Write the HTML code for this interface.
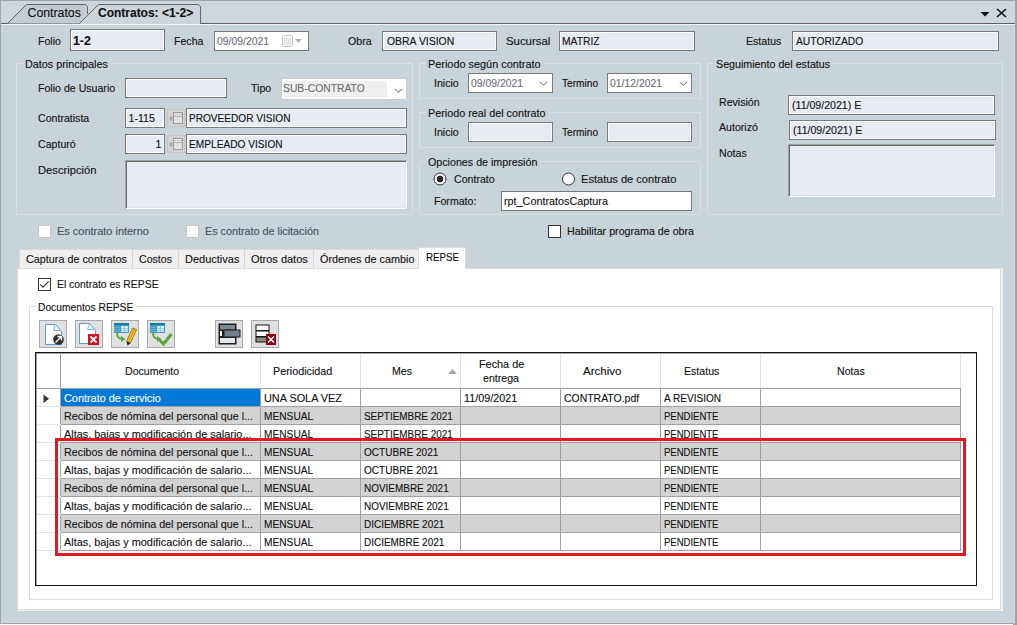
<!DOCTYPE html>
<html><head><meta charset="utf-8">
<style>
*{box-sizing:border-box;margin:0;padding:0}
html,body{width:1017px;height:625px;overflow:hidden;background:#fff}
body{position:relative;font-family:"Liberation Sans",sans-serif;font-size:10.6px;color:#111}
.a{position:absolute}
.t{position:absolute;white-space:nowrap;-webkit-text-stroke:0.12px currentColor}
</style></head><body>
<div class="a" style="left:0px;top:0px;width:1017px;height:624px;background:#a3a3a3"></div>
<div class="a" style="left:1013px;top:624px;width:4px;height:1px;background:#a3a3a3"></div>
<div class="a" style="left:1px;top:1px;width:1014px;height:622px;background:#ced7dd"></div>
<div class="a" style="left:1px;top:1px;width:1013px;height:621px;background:#c9d3da"></div>
<div class="a" style="left:1px;top:1px;width:1014px;height:22px;background:#cdd6dc"></div>
<div class="a" style="left:1px;top:23px;width:1014px;height:1px;background:#5f5f5f"></div>
<div class="a" style="left:1px;top:24px;width:1014px;height:1px;background:#f1f4f6"></div>
<svg class="a" style="left:0;top:0" width="1017" height="26">
<path d="M7.5,23.5 L26.5,4.5 L85.5,4.5 L87.5,6.5 L87.5,14 L79.5,23.5 Z" fill="#c3ccd3" stroke="none"/>
<path d="M7.5,23.5 L26.5,4.5 L85.5,4.5 L87.5,6.5 L87.5,14" fill="none" stroke="#666" stroke-width="1"/>
<path d="M79.5,23.5 L98.5,4.5 L198.5,4.5 L200.5,6.5 L200.5,23.5" fill="#ccd5db" stroke="#666" stroke-width="1"/>
<rect x="80" y="23" width="120" height="1" fill="#ccd5db"/>
<path d="M980.5,12 L989.5,12 L985,16.5 Z" fill="#111"/>
<path d="M997,9 L1006,17 M1006,9 L997,17" stroke="#111" stroke-width="1.6"/>
</svg>
<div class="t" style="left:27.5px;top:5.84px;font-size:12.3px;line-height:14px;">Contratos</div>
<div class="t" style="left:97.5px;top:5.84px;font-size:12.3px;line-height:14px;font-weight:bold;transform:scaleX(0.975);transform-origin:0 0;">Contratos: &lt;1-2&gt;</div>
<div class="t" style="left:38px;top:34.43px;font-size:10.6px;line-height:14px;">Folio</div>
<div class="a" style="left:70px;top:29px;width:95px;height:22px;background:#7a7a7a"></div>
<div class="a" style="left:71px;top:30px;width:93px;height:20px;background:#ffffff"></div>
<div class="a" style="left:72px;top:31px;width:91px;height:18px;background:#e7ecf3"></div>
<div class="t" style="left:72.5px;top:33.60px;font-size:13px;line-height:14px;font-weight:bold;transform:scaleX(0.95);transform-origin:0 0;">1-2</div>
<div class="t" style="left:174px;top:34.43px;font-size:10.6px;line-height:14px;">Fecha</div>
<div class="a" style="left:214px;top:31px;width:95px;height:20px;background:#7a7a7a"></div>
<div class="a" style="left:215px;top:32px;width:93px;height:18px;background:#ffffff"></div>
<div class="a" style="left:216px;top:33px;width:91px;height:16px;background:#ffffff"></div>
<div class="t" style="left:217px;top:34.43px;font-size:10.6px;line-height:14px;color:#6e6e78;transform:scaleX(0.981);transform-origin:0 0;">09/09/2021</div>
<svg class="a" style="left:280px;top:34px" width="24" height="15">
<rect x="2.5" y="1.5" width="10" height="11" rx="1.2" fill="#fafafa" stroke="#c9c4c4" stroke-width="1"/>
<rect x="4" y="4" width="7" height="7" fill="#dcdee8"/>
<g fill="#fff"><rect x="5" y="5" width="1" height="1"/><rect x="7" y="5" width="1" height="1"/><rect x="9" y="5" width="1" height="1"/><rect x="5" y="7" width="1" height="1"/><rect x="7" y="7" width="1" height="1"/><rect x="9" y="7" width="1" height="1"/><rect x="5" y="9" width="1" height="1"/><rect x="7" y="9" width="1" height="1"/><rect x="9" y="9" width="1" height="1"/></g>
<path d="M15,5 L22,5 L18.5,9 Z" fill="#b4b4a8"/>
</svg>
<div class="t" style="left:348px;top:34.43px;font-size:10.6px;line-height:14px;">Obra</div>
<div class="a" style="left:382px;top:31px;width:115px;height:20px;background:#7a7a7a"></div>
<div class="a" style="left:383px;top:32px;width:113px;height:18px;background:#ffffff"></div>
<div class="a" style="left:384px;top:33px;width:111px;height:16px;background:#e7ecf3"></div>
<div class="t" style="left:387px;top:34.43px;font-size:10.6px;line-height:14px;transform:scaleX(0.985);transform-origin:0 0;">OBRA VISION</div>
<div class="t" style="left:506px;top:34.43px;font-size:10.6px;line-height:14px;transform:scaleX(1.075);transform-origin:0 0;">Sucursal</div>
<div class="a" style="left:559px;top:31px;width:136px;height:20px;background:#7a7a7a"></div>
<div class="a" style="left:560px;top:32px;width:134px;height:18px;background:#ffffff"></div>
<div class="a" style="left:561px;top:33px;width:132px;height:16px;background:#e7ecf3"></div>
<div class="t" style="left:561.5px;top:34.43px;font-size:10.6px;line-height:14px;transform:scaleX(0.974);transform-origin:0 0;">MATRIZ</div>
<div class="t" style="left:746px;top:34.43px;font-size:10.6px;line-height:14px;">Estatus</div>
<div class="a" style="left:792px;top:31px;width:207px;height:20px;background:#7a7a7a"></div>
<div class="a" style="left:793px;top:32px;width:205px;height:18px;background:#ffffff"></div>
<div class="a" style="left:794px;top:33px;width:203px;height:16px;background:#e7ecf3"></div>
<div class="t" style="left:795.5px;top:34.43px;font-size:10.6px;line-height:14px;transform:scaleX(0.971);transform-origin:0 0;">AUTORIZADO</div>
<div class="a" style="left:16px;top:63px;width:397px;height:1px;background:#dcdfe1"></div>
<div class="a" style="left:16px;top:63px;width:1px;height:152px;background:#dcdfe1"></div>
<div class="a" style="left:412px;top:63px;width:1px;height:152px;background:#dcdfe1"></div>
<div class="a" style="left:16px;top:214px;width:397px;height:1px;background:#dcdfe1"></div>
<div class="t" style="left:25px;top:57.43px;font-size:10.6px;line-height:14px;transform:scaleX(1.02);transform-origin:0 0;"><span style="background:#c9d3da;padding:0 3px 0 2px;margin-left:-2px">Datos principales</span></div>
<div class="a" style="left:419px;top:63px;width:282px;height:1px;background:#dcdfe1"></div>
<div class="a" style="left:419px;top:63px;width:1px;height:36px;background:#dcdfe1"></div>
<div class="a" style="left:700px;top:63px;width:1px;height:36px;background:#dcdfe1"></div>
<div class="a" style="left:419px;top:98px;width:282px;height:1px;background:#dcdfe1"></div>
<div class="t" style="left:428px;top:57.43px;font-size:10.6px;line-height:14px;transform:scaleX(1.028);transform-origin:0 0;"><span style="background:#c9d3da;padding:0 3px 0 2px;margin-left:-2px">Periodo según contrato</span></div>
<div class="a" style="left:419px;top:112px;width:282px;height:1px;background:#dcdfe1"></div>
<div class="a" style="left:419px;top:112px;width:1px;height:36px;background:#dcdfe1"></div>
<div class="a" style="left:700px;top:112px;width:1px;height:36px;background:#dcdfe1"></div>
<div class="a" style="left:419px;top:147px;width:282px;height:1px;background:#dcdfe1"></div>
<div class="t" style="left:428px;top:106.43px;font-size:10.6px;line-height:14px;transform:scaleX(1.018);transform-origin:0 0;"><span style="background:#c9d3da;padding:0 3px 0 2px;margin-left:-2px">Periodo real del contrato</span></div>
<div class="a" style="left:419px;top:161px;width:282px;height:1px;background:#dcdfe1"></div>
<div class="a" style="left:419px;top:161px;width:1px;height:54px;background:#dcdfe1"></div>
<div class="a" style="left:700px;top:161px;width:1px;height:54px;background:#dcdfe1"></div>
<div class="a" style="left:419px;top:214px;width:282px;height:1px;background:#dcdfe1"></div>
<div class="t" style="left:428px;top:155.43px;font-size:10.6px;line-height:14px;transform:scaleX(1.009);transform-origin:0 0;"><span style="background:#c9d3da;padding:0 3px 0 2px;margin-left:-2px">Opciones de impresión</span></div>
<div class="a" style="left:707px;top:63px;width:296px;height:1px;background:#dcdfe1"></div>
<div class="a" style="left:707px;top:63px;width:1px;height:152px;background:#dcdfe1"></div>
<div class="a" style="left:1002px;top:63px;width:1px;height:152px;background:#dcdfe1"></div>
<div class="a" style="left:707px;top:214px;width:296px;height:1px;background:#dcdfe1"></div>
<div class="t" style="left:716px;top:57.43px;font-size:10.6px;line-height:14px;transform:scaleX(1.009);transform-origin:0 0;"><span style="background:#c9d3da;padding:0 3px 0 2px;margin-left:-2px">Seguimiento del estatus</span></div>
<div class="t" style="left:38px;top:81.43px;font-size:10.6px;line-height:14px;">Folio de Usuario</div>
<div class="a" style="left:125px;top:78px;width:102px;height:20px;background:#7a7a7a"></div>
<div class="a" style="left:126px;top:79px;width:100px;height:18px;background:#ffffff"></div>
<div class="a" style="left:127px;top:80px;width:98px;height:16px;background:#e7ecf3"></div>
<div class="t" style="left:251px;top:81.43px;font-size:10.6px;line-height:14px;">Tipo</div>
<div class="a" style="left:281px;top:78px;width:126px;height:22px;background:#c9cbcd"></div>
<div class="a" style="left:282px;top:79px;width:124px;height:20px;background:#ffffff"></div>
<div class="a" style="left:284px;top:81px;width:103px;height:16px;background:#efefef"></div>
<div class="t" style="left:283px;top:81.43px;font-size:10.6px;line-height:14px;color:#6d6d6d;transform:scaleX(0.976);transform-origin:0 0;">SUB-CONTRATO</div>
<svg class="a" style="left:393.5px;top:87.5px" width="10" height="7"><path d="M0.8,0.8 L4.5,4.3 L8.2,0.8" fill="none" stroke="#8a8a8a" stroke-width="1.1"/></svg>
<div class="t" style="left:38px;top:111.43px;font-size:10.6px;line-height:14px;">Contratista</div>
<div class="a" style="left:125px;top:108px;width:40px;height:20px;background:#7a7a7a"></div>
<div class="a" style="left:126px;top:109px;width:38px;height:18px;background:#ffffff"></div>
<div class="a" style="left:127px;top:110px;width:36px;height:16px;background:#e7ecf3"></div>
<div class="t" style="left:128.5px;top:111.43px;font-size:10.6px;line-height:14px;">1-115</div>
<svg class="a" style="left:167px;top:109px" width="18" height="18">
<rect x="0.5" y="0.5" width="17" height="17" fill="#d3d3d3" stroke="#c6c6c6"/>
<rect x="6.5" y="3.5" width="9" height="11" fill="#e2e2e2" stroke="#9c9c9c"/>
<rect x="7" y="4" width="8" height="2.5" fill="#ececec"/>
<path d="M8,5.5 H9 M10,5.5 H11 M12,5.5 H13 M14,5.5 H15" stroke="#a8a8a8"/>
<path d="M7,7.5 H15" stroke="#b0b0b0"/>
<path d="M4,7 L5.5,8.5 L5.5,10.5 L4,12 L2.5,10.5 L2.5,8.5 Z" fill="#a8a8a8"/>
</svg>
<div class="a" style="left:186px;top:108px;width:221px;height:20px;background:#7a7a7a"></div>
<div class="a" style="left:187px;top:109px;width:219px;height:18px;background:#ffffff"></div>
<div class="a" style="left:188px;top:110px;width:217px;height:16px;background:#e7ecf3"></div>
<div class="t" style="left:189px;top:111.43px;font-size:10.6px;line-height:14px;transform:scaleX(0.952);transform-origin:0 0;">PROVEEDOR VISION</div>
<div class="t" style="left:38px;top:137.43px;font-size:10.6px;line-height:14px;">Capturó</div>
<div class="a" style="left:125px;top:134px;width:40px;height:20px;background:#7a7a7a"></div>
<div class="a" style="left:126px;top:135px;width:38px;height:18px;background:#ffffff"></div>
<div class="a" style="left:127px;top:136px;width:36px;height:16px;background:#e7ecf3"></div>
<div class="t" style="left:155.5px;top:137.43px;font-size:10.6px;line-height:14px;">1</div>
<svg class="a" style="left:167px;top:135px" width="18" height="18">
<rect x="0.5" y="0.5" width="17" height="17" fill="#d3d3d3" stroke="#c6c6c6"/>
<rect x="6.5" y="3.5" width="9" height="11" fill="#e2e2e2" stroke="#9c9c9c"/>
<rect x="7" y="4" width="8" height="2.5" fill="#ececec"/>
<path d="M8,5.5 H9 M10,5.5 H11 M12,5.5 H13 M14,5.5 H15" stroke="#a8a8a8"/>
<path d="M7,7.5 H15" stroke="#b0b0b0"/>
<path d="M4,7 L5.5,8.5 L5.5,10.5 L4,12 L2.5,10.5 L2.5,8.5 Z" fill="#a8a8a8"/>
</svg>
<div class="a" style="left:186px;top:134px;width:221px;height:20px;background:#7a7a7a"></div>
<div class="a" style="left:187px;top:135px;width:219px;height:18px;background:#ffffff"></div>
<div class="a" style="left:188px;top:136px;width:217px;height:16px;background:#e7ecf3"></div>
<div class="t" style="left:189px;top:137.43px;font-size:10.6px;line-height:14px;transform:scaleX(0.958);transform-origin:0 0;">EMPLEADO VISION</div>
<div class="t" style="left:38px;top:163.43px;font-size:10.6px;line-height:14px;transform:scaleX(1.056);transform-origin:0 0;">Descripción</div>
<div class="a" style="left:125px;top:160px;width:282px;height:49px;background:#a0a0a0"></div>
<div class="a" style="left:126px;top:161px;width:281px;height:48px;background:#ffffff"></div>
<div class="a" style="left:126px;top:161px;width:280px;height:47px;background:#696969"></div>
<div class="a" style="left:127px;top:162px;width:279px;height:46px;background:#e3e3e3"></div>
<div class="a" style="left:127px;top:162px;width:278px;height:45px;background:#e7ecf3"></div>
<div class="t" style="left:434px;top:76.43px;font-size:10.6px;line-height:14px;">Inicio</div>
<div class="a" style="left:468px;top:73px;width:85px;height:20px;background:#7a7a7a"></div>
<div class="a" style="left:469px;top:74px;width:83px;height:18px;background:#fff"></div>
<div class="a" style="left:470px;top:75px;width:81px;height:16px;background:#fff"></div>
<div class="t" style="left:471px;top:76.43px;font-size:10.6px;line-height:14px;color:#6e6e78;transform:scaleX(0.981);transform-origin:0 0;">09/09/2021</div>
<div class="t" style="left:562px;top:76.43px;font-size:10.6px;line-height:14px;transform:scaleX(0.959);transform-origin:0 0;">Termino</div>
<div class="a" style="left:607px;top:73px;width:85px;height:20px;background:#7a7a7a"></div>
<div class="a" style="left:608px;top:74px;width:83px;height:18px;background:#fff"></div>
<div class="a" style="left:609px;top:75px;width:81px;height:16px;background:#fff"></div>
<div class="t" style="left:610px;top:76.43px;font-size:10.6px;line-height:14px;color:#6e6e78;transform:scaleX(0.981);transform-origin:0 0;">01/12/2021</div>
<svg class="a" style="left:538.8px;top:80.5px" width="10" height="7"><path d="M0.8,0.8 L4.5,4.3 L8.2,0.8" fill="none" stroke="#8a8a8a" stroke-width="1.1"/></svg>
<svg class="a" style="left:678.6px;top:80.5px" width="10" height="7"><path d="M0.8,0.8 L4.5,4.3 L8.2,0.8" fill="none" stroke="#8a8a8a" stroke-width="1.1"/></svg>
<div class="t" style="left:434px;top:125.43px;font-size:10.6px;line-height:14px;">Inicio</div>
<div class="a" style="left:468px;top:122px;width:85px;height:20px;background:#7a7a7a"></div>
<div class="a" style="left:469px;top:123px;width:83px;height:18px;background:#ffffff"></div>
<div class="a" style="left:470px;top:124px;width:81px;height:16px;background:#e7ecf3"></div>
<div class="t" style="left:562px;top:125.43px;font-size:10.6px;line-height:14px;transform:scaleX(0.959);transform-origin:0 0;">Termino</div>
<div class="a" style="left:607px;top:122px;width:85px;height:20px;background:#7a7a7a"></div>
<div class="a" style="left:608px;top:123px;width:83px;height:18px;background:#ffffff"></div>
<div class="a" style="left:609px;top:124px;width:81px;height:16px;background:#e7ecf3"></div>
<svg class="a" style="left:432px;top:171px" width="150" height="16">
<circle cx="8" cy="8" r="6" fill="#fff" stroke="#333" stroke-width="1"/><circle cx="8" cy="8" r="3.2" fill="#222"/>
<circle cx="136.5" cy="8" r="6" fill="#fff" stroke="#333" stroke-width="1"/>
</svg>
<div class="t" style="left:454px;top:172.43px;font-size:10.6px;line-height:14px;">Contrato</div>
<div class="t" style="left:581px;top:172.43px;font-size:10.6px;line-height:14px;transform:scaleX(1.044);transform-origin:0 0;">Estatus de contrato</div>
<div class="t" style="left:434px;top:194.43px;font-size:10.6px;line-height:14px;">Formato:</div>
<div class="a" style="left:501px;top:191px;width:191px;height:20px;background:#7a7a7a"></div>
<div class="a" style="left:502px;top:192px;width:189px;height:18px;background:#fff"></div>
<div class="a" style="left:503px;top:193px;width:187px;height:16px;background:#fff"></div>
<div class="t" style="left:504px;top:194.43px;font-size:10.6px;line-height:14px;transform:scaleX(1.02);transform-origin:0 0;">rpt_ContratosCaptura</div>
<div class="t" style="left:719px;top:95.43px;font-size:10.6px;line-height:14px;">Revisión</div>
<div class="a" style="left:788px;top:95px;width:207px;height:20px;background:#7a7a7a"></div>
<div class="a" style="left:789px;top:96px;width:205px;height:18px;background:#ffffff"></div>
<div class="a" style="left:790px;top:97px;width:203px;height:16px;background:#e7ecf3"></div>
<div class="t" style="left:792px;top:98.43px;font-size:10.6px;line-height:14px;">(11/09/2021) E</div>
<div class="t" style="left:719px;top:120.43px;font-size:10.6px;line-height:14px;">Autorizó</div>
<div class="a" style="left:789px;top:120px;width:207px;height:20px;background:#7a7a7a"></div>
<div class="a" style="left:790px;top:121px;width:205px;height:18px;background:#ffffff"></div>
<div class="a" style="left:791px;top:122px;width:203px;height:16px;background:#e7ecf3"></div>
<div class="t" style="left:793px;top:123.43px;font-size:10.6px;line-height:14px;">(11/09/2021) E</div>
<div class="t" style="left:719px;top:146.43px;font-size:10.6px;line-height:14px;">Notas</div>
<div class="a" style="left:788px;top:144px;width:207px;height:53px;background:#a0a0a0"></div>
<div class="a" style="left:789px;top:145px;width:206px;height:52px;background:#ffffff"></div>
<div class="a" style="left:789px;top:145px;width:205px;height:51px;background:#696969"></div>
<div class="a" style="left:790px;top:146px;width:204px;height:50px;background:#e3e3e3"></div>
<div class="a" style="left:790px;top:146px;width:203px;height:49px;background:#e7ecf3"></div>
<div class="a" style="left:38px;top:225px;width:13px;height:13px;background:#c8c8c8"></div>
<div class="a" style="left:39px;top:226px;width:11px;height:11px;background:#ffffff"></div>
<div class="t" style="left:57px;top:224.43px;font-size:10.6px;line-height:14px;color:#46525e;transform:scaleX(1.034);transform-origin:0 0;">Es contrato interno</div>
<div class="a" style="left:186px;top:225px;width:13px;height:13px;background:#c8c8c8"></div>
<div class="a" style="left:187px;top:226px;width:11px;height:11px;background:#ffffff"></div>
<div class="t" style="left:205px;top:224.43px;font-size:10.6px;line-height:14px;color:#46525e;transform:scaleX(1.018);transform-origin:0 0;">Es contrato de licitación</div>
<div class="a" style="left:548px;top:225px;width:13px;height:13px;background:#333"></div>
<div class="a" style="left:549px;top:226px;width:11px;height:11px;background:#fff"></div>
<div class="t" style="left:567px;top:224.43px;font-size:10.6px;line-height:14px;transform:scaleX(1.008);transform-origin:0 0;">Habilitar programa de obra</div>
<div class="a" style="left:17px;top:268px;width:986px;height:343px;background:#f0f0f0"></div>
<div class="a" style="left:17px;top:268px;width:984px;height:342px;background:#dadada"></div>
<div class="a" style="left:18px;top:269px;width:982px;height:340px;background:#ffffff"></div>
<div class="a" style="left:19px;top:249px;width:399px;height:20px;background:#dadada"></div>
<div class="a" style="left:20px;top:250px;width:398px;height:18px;background:#efefef"></div>
<div class="a" style="left:132px;top:250px;width:1px;height:18px;background:#d6d6d6"></div>
<div class="a" style="left:178px;top:250px;width:1px;height:18px;background:#d6d6d6"></div>
<div class="a" style="left:244px;top:250px;width:1px;height:18px;background:#d6d6d6"></div>
<div class="a" style="left:313px;top:250px;width:1px;height:18px;background:#d6d6d6"></div>
<div class="a" style="left:418px;top:247px;width:48px;height:22px;background:#dadada"></div>
<div class="a" style="left:419px;top:248px;width:46px;height:22px;background:#ffffff"></div>
<div class="t" style="left:25.5px;top:252.43px;font-size:10.6px;line-height:14px;transform:scaleX(1.02);transform-origin:0 0;">Captura de contratos</div>
<div class="t" style="left:139px;top:252.43px;font-size:10.6px;line-height:14px;">Costos</div>
<div class="t" style="left:185px;top:252.43px;font-size:10.6px;line-height:14px;transform:scaleX(1.039);transform-origin:0 0;">Deductivas</div>
<div class="t" style="left:251px;top:252.43px;font-size:10.6px;line-height:14px;transform:scaleX(1.036);transform-origin:0 0;">Otros datos</div>
<div class="t" style="left:320px;top:252.43px;font-size:10.6px;line-height:14px;transform:scaleX(1.022);transform-origin:0 0;">Órdenes de cambio</div>
<div class="t" style="left:426px;top:250.43px;font-size:10.6px;line-height:14px;transform:scaleX(0.92);transform-origin:0 0;">REPSE</div>
<div class="a" style="left:38px;top:278px;width:13px;height:13px;background:#333"></div>
<div class="a" style="left:39px;top:279px;width:11px;height:11px;background:#fff"></div>
<svg class="a" style="left:39px;top:279px" width="11" height="11"><path d="M1.2,5.4 L4,8.2 L9.7,2.4" fill="none" stroke="#333" stroke-width="1.1"/></svg>
<div class="t" style="left:57px;top:277.43px;font-size:10.6px;line-height:14px;transform:scaleX(0.98);transform-origin:0 0;">El contrato es REPSE</div>
<div class="a" style="left:29px;top:306px;width:964px;height:1px;background:#dcdcdc"></div>
<div class="a" style="left:29px;top:306px;width:1px;height:294px;background:#dcdcdc"></div>
<div class="a" style="left:992px;top:306px;width:1px;height:294px;background:#dcdcdc"></div>
<div class="a" style="left:29px;top:599px;width:964px;height:1px;background:#dcdcdc"></div>
<div class="t" style="left:38px;top:300.43px;font-size:10.6px;line-height:14px;transform:scaleX(0.969);transform-origin:0 0;"><span style="background:#fff;padding:0 3px 0 2px;margin-left:-2px">Documentos REPSE</span></div>
<div class="a" style="left:39px;top:320px;width:28px;height:28px;background:#a9a9a9"></div>
<div class="a" style="left:40px;top:321px;width:26px;height:26px;background:#e0e0e0"></div>
<div class="a" style="left:75px;top:320px;width:28px;height:28px;background:#a9a9a9"></div>
<div class="a" style="left:76px;top:321px;width:26px;height:26px;background:#e0e0e0"></div>
<div class="a" style="left:111px;top:320px;width:28px;height:28px;background:#a9a9a9"></div>
<div class="a" style="left:112px;top:321px;width:26px;height:26px;background:#e0e0e0"></div>
<div class="a" style="left:147px;top:320px;width:28px;height:28px;background:#a9a9a9"></div>
<div class="a" style="left:148px;top:321px;width:26px;height:26px;background:#e0e0e0"></div>
<div class="a" style="left:215px;top:320px;width:28px;height:28px;background:#a9a9a9"></div>
<div class="a" style="left:216px;top:321px;width:26px;height:26px;background:#e0e0e0"></div>
<div class="a" style="left:251px;top:320px;width:28px;height:28px;background:#a9a9a9"></div>
<div class="a" style="left:252px;top:321px;width:26px;height:26px;background:#e0e0e0"></div>
<svg class="a" style="left:0;top:0" width="1017" height="625">
<!-- btn1 doc + arrow -->
<path d="M45.5,324.5 H55.5 L61.5,331.5 V344.5 H45.5 Z" fill="#fff" stroke="#5b9bd8" stroke-width="1"/>
<path d="M55.5,324.5 L53.5,330.5 H61.5" fill="none" stroke="#7fb0e0" stroke-width="1"/>
<circle cx="58.5" cy="339.5" r="5.3" fill="#2e2e2e"/>
<path d="M55.5,342.5 L61,337 M57.5,336.5 H61.5 V340.5" fill="none" stroke="#fff" stroke-width="1.4"/>
<!-- btn2 doc + red x -->
<path d="M79.5,323.5 H89.5 L95.5,330.5 V343.5 H79.5 Z" fill="#fff" stroke="#5b9bd8" stroke-width="1"/>
<path d="M89.5,323.5 L87.5,329.5 H95.5" fill="none" stroke="#7fb0e0" stroke-width="1"/>
<rect x="88" y="334" width="11" height="11" fill="#d0101c"/>
<path d="M90.5,336.5 L96.5,342.5 M96.5,336.5 L90.5,342.5" stroke="#fff" stroke-width="1.8"/>
<!-- btn3 table + arrow + pencil -->
<rect x="114" y="323" width="15" height="10" fill="#3d9cc4"/>
<rect x="114" y="323" width="15" height="2" fill="#147aa6"/>
<rect x="121" y="326" width="7" height="6" fill="#d8eaf2"/>
<path d="M124.5,326 V332 M121,328.5 H128 M121,330.5 H128" stroke="#8cc4dc" stroke-width="0.8"/>
<path d="M114,327.5 H120 M114,329.5 H120 M114,331.5 H120" stroke="#7cbcd8" stroke-width="0.6"/>
<path d="M117.5,332 Q116,338 122,339" fill="none" stroke="#5aa53a" stroke-width="2"/>
<path d="M121,336 L125.5,339 L121,342 Z" fill="#5aa53a"/>
<path d="M132.5,328 L136.5,329.5 L130.5,343 L126.5,341.5 Z" fill="#f2c21a" stroke="#9a6a10" stroke-width="0.8"/>
<path d="M134.5,328.8 L128.5,342.2" stroke="#c88a10" stroke-width="0.8"/>
<path d="M126.5,341.5 L130.5,343 L127.6,345.5 Z" fill="#1a1a1a"/>
<!-- btn4 table + arrow + check -->
<rect x="150" y="323" width="15" height="10" fill="#3d9cc4"/>
<rect x="150" y="323" width="15" height="2" fill="#147aa6"/>
<rect x="157" y="326" width="7" height="6" fill="#d8eaf2"/>
<path d="M160.5,326 V332 M157,328.5 H164 M157,330.5 H164" stroke="#8cc4dc" stroke-width="0.8"/>
<path d="M150,327.5 H156 M150,329.5 H156 M150,331.5 H156" stroke="#7cbcd8" stroke-width="0.6"/>
<path d="M153.5,332 Q152,338 158,339" fill="none" stroke="#5aa53a" stroke-width="2"/>
<path d="M157,336 L161.5,339 L157,342 Z" fill="#5aa53a"/>
<path d="M159.5,340 L163.5,344 L171.5,334" fill="none" stroke="#5aa53a" stroke-width="3"/>
<!-- btn5 stacked rows -->
<rect x="218.5" y="323.5" width="18" height="21" fill="#1e1e1e"/>
<rect x="220" y="325" width="15" height="4.5" fill="#7a8a98"/>
<rect x="220" y="338" width="15" height="5" fill="#e3ebf2"/>
<rect x="220" y="331" width="2" height="5" fill="#f4f4f4"/>
<rect x="223.5" y="329.5" width="17" height="8" fill="#1e1e1e"/>
<rect x="224.5" y="330.5" width="15" height="6" fill="#6f7f8c"/>
<!-- btn6 rows + red x -->
<rect x="255.5" y="324.5" width="14" height="18" fill="#111"/>
<rect x="256.5" y="325.5" width="12" height="4.5" fill="#fff"/>
<rect x="256.5" y="331.5" width="12" height="4.5" fill="#fff"/>
<rect x="256.5" y="337.5" width="12" height="4" fill="#8c8c7a"/>
<rect x="266" y="334" width="10" height="11" fill="#8a0010"/>
<path d="M268,336.5 L274,342.5 M274,336.5 L268,342.5" stroke="#fff" stroke-width="1.5"/>
</svg>
<div class="a" style="left:35px;top:352px;width:942px;height:234px;background:#111"></div>
<div class="a" style="left:36px;top:353px;width:940px;height:232px;background:#a9a9a9"></div>
<div class="a" style="left:37px;top:354px;width:939px;height:231px;background:#ffffff"></div>
<div class="a" style="left:60px;top:353px;width:1px;height:36px;background:#a0a0a0"></div>
<div class="a" style="left:260px;top:354px;width:1px;height:34px;background:#e3e3e3"></div>
<div class="a" style="left:360px;top:354px;width:1px;height:34px;background:#e3e3e3"></div>
<div class="a" style="left:460px;top:354px;width:1px;height:34px;background:#e3e3e3"></div>
<div class="a" style="left:560px;top:354px;width:1px;height:34px;background:#e3e3e3"></div>
<div class="a" style="left:660px;top:354px;width:1px;height:34px;background:#e3e3e3"></div>
<div class="a" style="left:760px;top:354px;width:1px;height:34px;background:#e3e3e3"></div>
<div class="a" style="left:960px;top:354px;width:1px;height:34px;background:#e3e3e3"></div>
<div class="a" style="left:37px;top:388px;width:924px;height:1px;background:#a0a0a0"></div>
<div class="t" style="left:125px;top:364.43px;font-size:10.6px;line-height:14px;">Documento</div>
<div class="t" style="left:273.3px;top:364.43px;font-size:10.6px;line-height:14px;transform:scaleX(1.018);transform-origin:0 0;">Periodicidad</div>
<div class="t" style="left:392px;top:364.43px;font-size:10.6px;line-height:14px;">Mes</div>
<svg class="a" style="left:447px;top:368px" width="11" height="7"><path d="M1,6 L5.5,1 L10,6 Z" fill="#a5a5a5"/></svg>
<div class="t" style="left:478.5px;top:357.43px;font-size:10.6px;line-height:14px;transform:scaleX(1.023);transform-origin:0 0;">Fecha de</div>
<div class="t" style="left:483px;top:371.43px;font-size:10.6px;line-height:14px;">entrega</div>
<div class="t" style="left:583px;top:364.43px;font-size:10.6px;line-height:14px;transform:scaleX(1.086);transform-origin:0 0;">Archivo</div>
<div class="t" style="left:684px;top:364.43px;font-size:10.6px;line-height:14px;">Estatus</div>
<div class="t" style="left:837px;top:364.43px;font-size:10.6px;line-height:14px;">Notas</div>
<div class="a" style="left:61px;top:389px;width:199px;height:17px;background:#0078d7"></div>
<div class="a" style="left:61px;top:406px;width:900px;height:1px;background:#a0a0a0"></div>
<div class="a" style="left:37px;top:406px;width:23px;height:1px;background:#e3e3e3"></div>
<div class="a" style="left:60px;top:389px;width:1px;height:17px;background:#a0a0a0"></div>
<div class="a" style="left:260px;top:389px;width:1px;height:17px;background:#a0a0a0"></div>
<div class="a" style="left:360px;top:389px;width:1px;height:17px;background:#a0a0a0"></div>
<div class="a" style="left:460px;top:389px;width:1px;height:17px;background:#a0a0a0"></div>
<div class="a" style="left:560px;top:389px;width:1px;height:17px;background:#a0a0a0"></div>
<div class="a" style="left:660px;top:389px;width:1px;height:17px;background:#a0a0a0"></div>
<div class="a" style="left:760px;top:389px;width:1px;height:17px;background:#a0a0a0"></div>
<div class="a" style="left:960px;top:389px;width:1px;height:17px;background:#a0a0a0"></div>
<div class="t" style="left:64px;top:391.43px;font-size:10.6px;line-height:14px;color:#fff;transform:scaleX(1.027);transform-origin:0 0;">Contrato de servicio</div>
<div class="t" style="left:264px;top:391.43px;font-size:10.6px;line-height:14px;transform:scaleX(1.027);transform-origin:0 0;">UNA SOLA VEZ</div>
<div class="t" style="left:464px;top:391.43px;font-size:10.6px;line-height:14px;transform:scaleX(1.02);transform-origin:0 0;">11/09/2021</div>
<div class="t" style="left:564px;top:391.43px;font-size:10.6px;line-height:14px;transform:scaleX(0.987);transform-origin:0 0;">CONTRATO.pdf</div>
<div class="t" style="left:664px;top:391.43px;font-size:10.6px;line-height:14px;transform:scaleX(0.95);transform-origin:0 0;">A REVISION</div>
<div class="a" style="left:61px;top:407px;width:899px;height:17px;background:#d3d3d3"></div>
<div class="a" style="left:61px;top:424px;width:900px;height:1px;background:#a0a0a0"></div>
<div class="a" style="left:37px;top:424px;width:23px;height:1px;background:#e3e3e3"></div>
<div class="a" style="left:60px;top:407px;width:1px;height:17px;background:#a0a0a0"></div>
<div class="a" style="left:260px;top:407px;width:1px;height:17px;background:#a0a0a0"></div>
<div class="a" style="left:360px;top:407px;width:1px;height:17px;background:#a0a0a0"></div>
<div class="a" style="left:460px;top:407px;width:1px;height:17px;background:#a0a0a0"></div>
<div class="a" style="left:560px;top:407px;width:1px;height:17px;background:#a0a0a0"></div>
<div class="a" style="left:660px;top:407px;width:1px;height:17px;background:#a0a0a0"></div>
<div class="a" style="left:760px;top:407px;width:1px;height:17px;background:#a0a0a0"></div>
<div class="a" style="left:960px;top:407px;width:1px;height:17px;background:#a0a0a0"></div>
<div class="t" style="left:64px;top:409.43px;font-size:10.6px;line-height:14px;transform:scaleX(1.016);transform-origin:0 0;">Recibos de nómina del personal que l...</div>
<div class="t" style="left:264px;top:409.43px;font-size:10.6px;line-height:14px;transform:scaleX(0.96);transform-origin:0 0;">MENSUAL</div>
<div class="t" style="left:364px;top:409.43px;font-size:10.6px;line-height:14px;transform:scaleX(0.936);transform-origin:0 0;">SEPTIEMBRE 2021</div>
<div class="t" style="left:664px;top:409.43px;font-size:10.6px;line-height:14px;transform:scaleX(0.898);transform-origin:0 0;">PENDIENTE</div>
<div class="a" style="left:61px;top:442px;width:900px;height:1px;background:#a0a0a0"></div>
<div class="a" style="left:37px;top:442px;width:23px;height:1px;background:#e3e3e3"></div>
<div class="a" style="left:60px;top:425px;width:1px;height:17px;background:#a0a0a0"></div>
<div class="a" style="left:260px;top:425px;width:1px;height:17px;background:#a0a0a0"></div>
<div class="a" style="left:360px;top:425px;width:1px;height:17px;background:#a0a0a0"></div>
<div class="a" style="left:460px;top:425px;width:1px;height:17px;background:#a0a0a0"></div>
<div class="a" style="left:560px;top:425px;width:1px;height:17px;background:#a0a0a0"></div>
<div class="a" style="left:660px;top:425px;width:1px;height:17px;background:#a0a0a0"></div>
<div class="a" style="left:760px;top:425px;width:1px;height:17px;background:#a0a0a0"></div>
<div class="a" style="left:960px;top:425px;width:1px;height:17px;background:#a0a0a0"></div>
<div class="t" style="left:64px;top:427.43px;font-size:10.6px;line-height:14px;transform:scaleX(1.027);transform-origin:0 0;">Altas, bajas y modificación de salario...</div>
<div class="t" style="left:264px;top:427.43px;font-size:10.6px;line-height:14px;transform:scaleX(0.96);transform-origin:0 0;">MENSUAL</div>
<div class="t" style="left:364px;top:427.43px;font-size:10.6px;line-height:14px;transform:scaleX(0.936);transform-origin:0 0;">SEPTIEMBRE 2021</div>
<div class="t" style="left:664px;top:427.43px;font-size:10.6px;line-height:14px;transform:scaleX(0.898);transform-origin:0 0;">PENDIENTE</div>
<div class="a" style="left:61px;top:443px;width:899px;height:17px;background:#d3d3d3"></div>
<div class="a" style="left:61px;top:460px;width:900px;height:1px;background:#a0a0a0"></div>
<div class="a" style="left:37px;top:460px;width:23px;height:1px;background:#e3e3e3"></div>
<div class="a" style="left:60px;top:443px;width:1px;height:17px;background:#a0a0a0"></div>
<div class="a" style="left:260px;top:443px;width:1px;height:17px;background:#a0a0a0"></div>
<div class="a" style="left:360px;top:443px;width:1px;height:17px;background:#a0a0a0"></div>
<div class="a" style="left:460px;top:443px;width:1px;height:17px;background:#a0a0a0"></div>
<div class="a" style="left:560px;top:443px;width:1px;height:17px;background:#a0a0a0"></div>
<div class="a" style="left:660px;top:443px;width:1px;height:17px;background:#a0a0a0"></div>
<div class="a" style="left:760px;top:443px;width:1px;height:17px;background:#a0a0a0"></div>
<div class="a" style="left:960px;top:443px;width:1px;height:17px;background:#a0a0a0"></div>
<div class="t" style="left:64px;top:445.43px;font-size:10.6px;line-height:14px;transform:scaleX(1.016);transform-origin:0 0;">Recibos de nómina del personal que l...</div>
<div class="t" style="left:264px;top:445.43px;font-size:10.6px;line-height:14px;transform:scaleX(0.96);transform-origin:0 0;">MENSUAL</div>
<div class="t" style="left:364px;top:445.43px;font-size:10.6px;line-height:14px;transform:scaleX(0.949);transform-origin:0 0;">OCTUBRE 2021</div>
<div class="t" style="left:664px;top:445.43px;font-size:10.6px;line-height:14px;transform:scaleX(0.898);transform-origin:0 0;">PENDIENTE</div>
<div class="a" style="left:61px;top:478px;width:900px;height:1px;background:#a0a0a0"></div>
<div class="a" style="left:37px;top:478px;width:23px;height:1px;background:#e3e3e3"></div>
<div class="a" style="left:60px;top:461px;width:1px;height:17px;background:#a0a0a0"></div>
<div class="a" style="left:260px;top:461px;width:1px;height:17px;background:#a0a0a0"></div>
<div class="a" style="left:360px;top:461px;width:1px;height:17px;background:#a0a0a0"></div>
<div class="a" style="left:460px;top:461px;width:1px;height:17px;background:#a0a0a0"></div>
<div class="a" style="left:560px;top:461px;width:1px;height:17px;background:#a0a0a0"></div>
<div class="a" style="left:660px;top:461px;width:1px;height:17px;background:#a0a0a0"></div>
<div class="a" style="left:760px;top:461px;width:1px;height:17px;background:#a0a0a0"></div>
<div class="a" style="left:960px;top:461px;width:1px;height:17px;background:#a0a0a0"></div>
<div class="t" style="left:64px;top:463.43px;font-size:10.6px;line-height:14px;transform:scaleX(1.027);transform-origin:0 0;">Altas, bajas y modificación de salario...</div>
<div class="t" style="left:264px;top:463.43px;font-size:10.6px;line-height:14px;transform:scaleX(0.96);transform-origin:0 0;">MENSUAL</div>
<div class="t" style="left:364px;top:463.43px;font-size:10.6px;line-height:14px;transform:scaleX(0.949);transform-origin:0 0;">OCTUBRE 2021</div>
<div class="t" style="left:664px;top:463.43px;font-size:10.6px;line-height:14px;transform:scaleX(0.898);transform-origin:0 0;">PENDIENTE</div>
<div class="a" style="left:61px;top:479px;width:899px;height:17px;background:#d3d3d3"></div>
<div class="a" style="left:61px;top:496px;width:900px;height:1px;background:#a0a0a0"></div>
<div class="a" style="left:37px;top:496px;width:23px;height:1px;background:#e3e3e3"></div>
<div class="a" style="left:60px;top:479px;width:1px;height:17px;background:#a0a0a0"></div>
<div class="a" style="left:260px;top:479px;width:1px;height:17px;background:#a0a0a0"></div>
<div class="a" style="left:360px;top:479px;width:1px;height:17px;background:#a0a0a0"></div>
<div class="a" style="left:460px;top:479px;width:1px;height:17px;background:#a0a0a0"></div>
<div class="a" style="left:560px;top:479px;width:1px;height:17px;background:#a0a0a0"></div>
<div class="a" style="left:660px;top:479px;width:1px;height:17px;background:#a0a0a0"></div>
<div class="a" style="left:760px;top:479px;width:1px;height:17px;background:#a0a0a0"></div>
<div class="a" style="left:960px;top:479px;width:1px;height:17px;background:#a0a0a0"></div>
<div class="t" style="left:64px;top:481.43px;font-size:10.6px;line-height:14px;transform:scaleX(1.016);transform-origin:0 0;">Recibos de nómina del personal que l...</div>
<div class="t" style="left:264px;top:481.43px;font-size:10.6px;line-height:14px;transform:scaleX(0.96);transform-origin:0 0;">MENSUAL</div>
<div class="t" style="left:364px;top:481.43px;font-size:10.6px;line-height:14px;transform:scaleX(0.94);transform-origin:0 0;">NOVIEMBRE 2021</div>
<div class="t" style="left:664px;top:481.43px;font-size:10.6px;line-height:14px;transform:scaleX(0.898);transform-origin:0 0;">PENDIENTE</div>
<div class="a" style="left:61px;top:514px;width:900px;height:1px;background:#a0a0a0"></div>
<div class="a" style="left:37px;top:514px;width:23px;height:1px;background:#e3e3e3"></div>
<div class="a" style="left:60px;top:497px;width:1px;height:17px;background:#a0a0a0"></div>
<div class="a" style="left:260px;top:497px;width:1px;height:17px;background:#a0a0a0"></div>
<div class="a" style="left:360px;top:497px;width:1px;height:17px;background:#a0a0a0"></div>
<div class="a" style="left:460px;top:497px;width:1px;height:17px;background:#a0a0a0"></div>
<div class="a" style="left:560px;top:497px;width:1px;height:17px;background:#a0a0a0"></div>
<div class="a" style="left:660px;top:497px;width:1px;height:17px;background:#a0a0a0"></div>
<div class="a" style="left:760px;top:497px;width:1px;height:17px;background:#a0a0a0"></div>
<div class="a" style="left:960px;top:497px;width:1px;height:17px;background:#a0a0a0"></div>
<div class="t" style="left:64px;top:499.43px;font-size:10.6px;line-height:14px;transform:scaleX(1.027);transform-origin:0 0;">Altas, bajas y modificación de salario...</div>
<div class="t" style="left:264px;top:499.43px;font-size:10.6px;line-height:14px;transform:scaleX(0.96);transform-origin:0 0;">MENSUAL</div>
<div class="t" style="left:364px;top:499.43px;font-size:10.6px;line-height:14px;transform:scaleX(0.94);transform-origin:0 0;">NOVIEMBRE 2021</div>
<div class="t" style="left:664px;top:499.43px;font-size:10.6px;line-height:14px;transform:scaleX(0.898);transform-origin:0 0;">PENDIENTE</div>
<div class="a" style="left:61px;top:515px;width:899px;height:17px;background:#d3d3d3"></div>
<div class="a" style="left:61px;top:532px;width:900px;height:1px;background:#a0a0a0"></div>
<div class="a" style="left:37px;top:532px;width:23px;height:1px;background:#e3e3e3"></div>
<div class="a" style="left:60px;top:515px;width:1px;height:17px;background:#a0a0a0"></div>
<div class="a" style="left:260px;top:515px;width:1px;height:17px;background:#a0a0a0"></div>
<div class="a" style="left:360px;top:515px;width:1px;height:17px;background:#a0a0a0"></div>
<div class="a" style="left:460px;top:515px;width:1px;height:17px;background:#a0a0a0"></div>
<div class="a" style="left:560px;top:515px;width:1px;height:17px;background:#a0a0a0"></div>
<div class="a" style="left:660px;top:515px;width:1px;height:17px;background:#a0a0a0"></div>
<div class="a" style="left:760px;top:515px;width:1px;height:17px;background:#a0a0a0"></div>
<div class="a" style="left:960px;top:515px;width:1px;height:17px;background:#a0a0a0"></div>
<div class="t" style="left:64px;top:517.43px;font-size:10.6px;line-height:14px;transform:scaleX(1.016);transform-origin:0 0;">Recibos de nómina del personal que l...</div>
<div class="t" style="left:264px;top:517.43px;font-size:10.6px;line-height:14px;transform:scaleX(0.96);transform-origin:0 0;">MENSUAL</div>
<div class="t" style="left:364px;top:517.43px;font-size:10.6px;line-height:14px;transform:scaleX(0.94);transform-origin:0 0;">DICIEMBRE 2021</div>
<div class="t" style="left:664px;top:517.43px;font-size:10.6px;line-height:14px;transform:scaleX(0.898);transform-origin:0 0;">PENDIENTE</div>
<div class="a" style="left:61px;top:550px;width:900px;height:1px;background:#a0a0a0"></div>
<div class="a" style="left:37px;top:550px;width:23px;height:1px;background:#e3e3e3"></div>
<div class="a" style="left:60px;top:533px;width:1px;height:17px;background:#a0a0a0"></div>
<div class="a" style="left:260px;top:533px;width:1px;height:17px;background:#a0a0a0"></div>
<div class="a" style="left:360px;top:533px;width:1px;height:17px;background:#a0a0a0"></div>
<div class="a" style="left:460px;top:533px;width:1px;height:17px;background:#a0a0a0"></div>
<div class="a" style="left:560px;top:533px;width:1px;height:17px;background:#a0a0a0"></div>
<div class="a" style="left:660px;top:533px;width:1px;height:17px;background:#a0a0a0"></div>
<div class="a" style="left:760px;top:533px;width:1px;height:17px;background:#a0a0a0"></div>
<div class="a" style="left:960px;top:533px;width:1px;height:17px;background:#a0a0a0"></div>
<div class="t" style="left:64px;top:535.43px;font-size:10.6px;line-height:14px;transform:scaleX(1.027);transform-origin:0 0;">Altas, bajas y modificación de salario...</div>
<div class="t" style="left:264px;top:535.43px;font-size:10.6px;line-height:14px;transform:scaleX(0.96);transform-origin:0 0;">MENSUAL</div>
<div class="t" style="left:364px;top:535.43px;font-size:10.6px;line-height:14px;transform:scaleX(0.94);transform-origin:0 0;">DICIEMBRE 2021</div>
<div class="t" style="left:664px;top:535.43px;font-size:10.6px;line-height:14px;transform:scaleX(0.898);transform-origin:0 0;">PENDIENTE</div>
<svg class="a" style="left:42.7px;top:394px" width="7" height="10"><path d="M0.5,0.5 L6,4.8 L0.5,9 Z" fill="#333"/></svg>
<div class="a" style="left:55px;top:438px;width:911px;height:118px;border:3px solid #e8161e"></div>
</body></html>
